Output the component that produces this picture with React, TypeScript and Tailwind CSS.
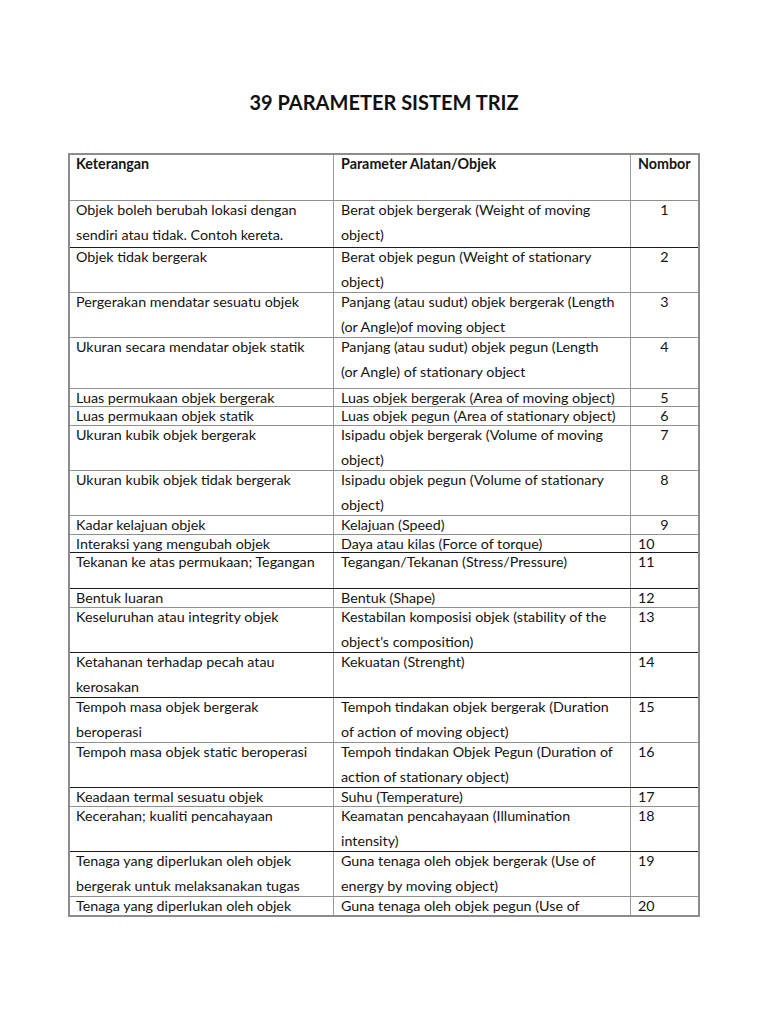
type Row = {
  h: number
  dark?: boolean
  a: string[]
  b: string[]
  n: string
  center?: boolean
}

const rows: Row[] = [
  { h: 47, a: ['Objek boleh berubah lokasi dengan', 'sendiri atau tidak. Contoh kereta.'], b: ['Berat objek bergerak (Weight of moving', 'object)'], n: '1', center: true },
  { h: 45, dark: true, a: ['Objek tidak bergerak'], b: ['Berat objek pegun (Weight of stationary', 'object)'], n: '2', center: true },
  { h: 45, a: ['Pergerakan mendatar sesuatu objek'], b: ['Panjang (atau sudut) objek bergerak (Length', '(or Angle)of moving object'], n: '3', center: true },
  { h: 51, a: ['Ukuran secara mendatar objek statik'], b: ['Panjang (atau sudut) objek pegun (Length', '(or Angle) of stationary object'], n: '4', center: true },
  { h: 18, a: ['Luas permukaan objek bergerak'], b: ['Luas objek bergerak (Area of moving object)'], n: '5', center: true },
  { h: 19, a: ['Luas permukaan objek statik'], b: ['Luas objek pegun (Area of stationary object)'], n: '6', center: true },
  { h: 45, a: ['Ukuran kubik objek bergerak'], b: ['Isipadu objek bergerak (Volume of moving', 'object)'], n: '7', center: true },
  { h: 45, a: ['Ukuran kubik objek tidak bergerak'], b: ['Isipadu objek pegun (Volume of stationary', 'object)'], n: '8', center: true },
  { h: 19, a: ['Kadar kelajuan objek'], b: ['Kelajuan (Speed)'], n: '9', center: true },
  { h: 18, a: ['Interaksi yang mengubah objek'], b: ['Daya atau kilas (Force of torque)'], n: '10' },
  { h: 36, dark: true, a: ['Tekanan ke atas permukaan; Tegangan'], b: ['Tegangan/Tekanan (Stress/Pressure)'], n: '11' },
  { h: 19, dark: true, a: ['Bentuk luaran'], b: ['Bentuk (Shape)'], n: '12' },
  { h: 45, a: ['Keseluruhan atau integrity objek'], b: ['Kestabilan komposisi objek (stability of the', 'object’s composition)'], n: '13' },
  { h: 45, dark: true, a: ['Ketahanan terhadap pecah atau', 'kerosakan'], b: ['Kekuatan (Strenght)'], n: '14' },
  { h: 45, dark: true, a: ['Tempoh masa objek bergerak', 'beroperasi'], b: ['Tempoh tindakan objek bergerak (Duration', 'of action of moving object)'], n: '15' },
  { h: 45, a: ['Tempoh masa objek static beroperasi'], b: ['Tempoh tindakan Objek Pegun (Duration of', 'action of stationary object)'], n: '16' },
  { h: 19, dark: true, a: ['Keadaan termal sesuatu objek'], b: ['Suhu (Temperature)'], n: '17' },
  { h: 45, a: ['Kecerahan; kualiti pencahayaan'], b: ['Keamatan pencahayaan (Illumination', 'intensity)'], n: '18' },
  { h: 45, dark: true, a: ['Tenaga yang diperlukan oleh objek', 'bergerak untuk melaksanakan tugas'], b: ['Guna tenaga oleh objek bergerak (Use of', 'energy by moving object)'], n: '19' },
  { h: 19, a: ['Tenaga yang diperlukan oleh objek'], b: ['Guna tenaga oleh objek pegun (Use of'], n: '20' },
]

function Lines({ lines }: { lines: string[] }) {
  return (
    <div className="flex flex-col gap-[7px]">
      {lines.map((l, i) => (
        <div key={i} className="leading-[18px] whitespace-nowrap">{l}</div>
      ))}
    </div>
  )
}

export default function App() {
  return (
    <div
      className="w-[768px] h-[1024px] bg-white text-[#141414] text-[14.3px]"
      style={{ fontFamily: 'Lato, "Open Sans", sans-serif' }}
    >
      <div className="pt-[88px] text-center text-[20px] font-bold leading-[28px] text-[#111]">
        39 PARAMETER SISTEM TRIZ
      </div>

      <div className="ml-[68px] mt-[37px] w-[632px] border-2 border-[#8c8c8c]">
        <div className="flex h-[45px] font-bold">
          <div className="w-[264px] pl-[6px] border-r border-[#9a9a9a]">
            <Lines lines={['Keterangan']} />
          </div>
          <div className="w-[297px] pl-[7px] border-r border-[#9a9a9a]">
            <Lines lines={['Parameter Alatan/Objek']} />
          </div>
          <div className="flex-1 pl-[7px]">
            <Lines lines={['Nombor']} />
          </div>
        </div>

        {rows.map((r, i) => (
          <div
            key={i}
            className={
              'flex border-t ' + (r.dark ? 'border-[#1e1e1e]' : 'border-[#8f8f8f]')
            }
            style={{ height: r.h }}
          >
            <div className="w-[264px] pl-[6px] border-r border-[#9a9a9a]">
              <Lines lines={r.a} />
            </div>
            <div className="w-[297px] pl-[7px] border-r border-[#9a9a9a]">
              <Lines lines={r.b} />
            </div>
            <div className={'flex-1 ' + (r.center ? 'text-center' : 'pl-[7px]')}>
              <Lines lines={[r.n]} />
            </div>
          </div>
        ))}
      </div>
    </div>
  )
}
